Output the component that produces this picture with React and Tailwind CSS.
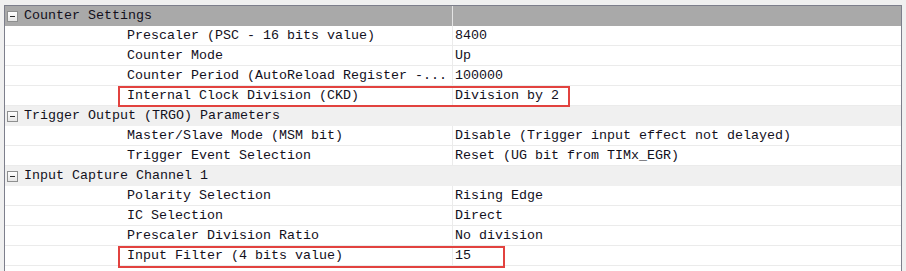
const groups = [
    {
        title: "Counter Settings",
        selected: true,
        rows: [
            ["Prescaler (PSC - 16 bits value)", "8400"],
            ["Counter Mode", "Up"],
            ["Counter Period (AutoReload Register -...", "100000"],
            ["Internal Clock Division (CKD)", "Division by 2"],
        ],
    },
    {
        title: "Trigger Output (TRGO) Parameters",
        rows: [
            ["Master/Slave Mode (MSM bit)", "Disable (Trigger input effect not delayed)"],
            ["Trigger Event Selection", "Reset (UG bit from TIMx_EGR)"],
        ],
    },
    {
        title: "Input Capture Channel 1",
        rows: [
            ["Polarity Selection", "Rising Edge"],
            ["IC Selection", "Direct"],
            ["Prescaler Division Ratio", "No division"],
            ["Input Filter (4 bits value)", "15"],
        ],
    },
];

function MinusBox() {
    return (
        <span className="w-[11px] h-[11px] border border-[#8e8f8f] bg-gradient-to-b from-white to-[#e6e6e6] flex items-center justify-center shrink-0">
            <span className="w-[5px] h-px bg-[#2c2c2c]" />
        </span>
    );
}

export default function App() {
    return (
        <div
            className="relative w-[906px] h-[271px] overflow-hidden bg-[#f0f0f0] pt-[5px] px-[4px] text-[13.33px] leading-none text-[#12101c]"
            style={{ fontFamily: '"Liberation Mono", "DejaVu Sans Mono", monospace' }}
        >
            <div className="h-full bg-white border-t border-x border-[#7d7f8c]">
                {groups.map((g) => (
                    <div key={g.title}>

                        {/* GROUP HEADER */}
                        <div
                            className={
                                g.selected
                                    ? "h-[20px] bg-[#a9a9a9] grid grid-cols-[448px_1fr]"
                                    : "h-[20px] bg-[#f0f0f0] grid grid-cols-[448px_1fr]"
                            }
                        >
                            <div
                                className={
                                    g.selected
                                        ? "flex items-center gap-[6px] pl-[2px] border-r border-[#e4e4e4]"
                                        : "flex items-center gap-[6px] pl-[2px]"
                                }
                            >
                                <MinusBox />
                                <span className="whitespace-pre">{g.title}</span>
                            </div>
                            <div />
                        </div>

                        {/* ROWS */}
                        {g.rows.map(([label, value]) => (
                            <div key={label} className="h-[20px] grid grid-cols-[448px_1fr] border-b border-[#ebebeb]">
                                <div className="flex items-center pl-[122px] border-r border-[#ebebeb] whitespace-pre">
                                    {label}
                                </div>
                                <div className="flex items-center pl-[2px] whitespace-pre">
                                    {value}
                                </div>
                            </div>
                        ))}
                    </div>
                ))}
            </div>

            {/* HIGHLIGHT BOXES */}
            <div className="absolute left-[118px] top-[86px] w-[452px] h-[21px] border-2 border-[#e2423f]" />
            <div className="absolute left-[118px] top-[246px] w-[387px] h-[22px] border-2 border-[#e2423f]" />
        </div>
    );
}
